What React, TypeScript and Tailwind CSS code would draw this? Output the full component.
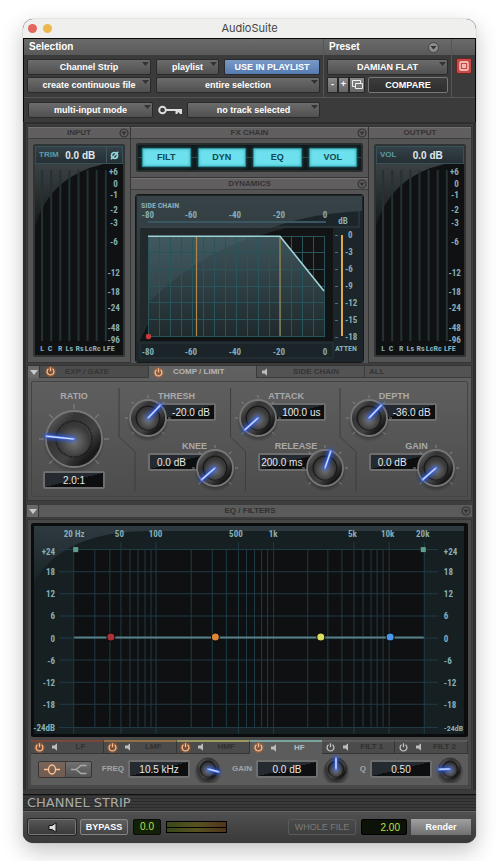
import React, { useId } from "react";

const narrow = '"Liberation Sans Narrow", "Roboto Condensed", "Open Sans Condensed", "DejaVu Sans Condensed", sans-serif';

function Dropdown({ label, value, className = "" }: { label: string; value: string; className?: string }) {
  return (
    <div className={`relative h-4 ${className}`}>
      <select
        aria-label={label}
        defaultValue={value}
        className="block h-4 w-full appearance-none rounded-[2px] border border-[#2a2a2a] bg-linear-to-b from-[#6c6c6c] to-[#505050] px-2 text-center text-[9px] leading-[14px] font-bold text-white outline-none [text-align-last:center]"
      >
        <option>{value}</option>
      </select>
      <svg className="pointer-events-none absolute top-[3px] right-[2px]" width="7" height="4" viewBox="0 0 7 4" aria-hidden="true">
        <path d="M0 0h7L3.5 4z" fill="#333" />
      </svg>
    </div>
  );
}

function MenuDot({ className = "" }: { className?: string }) {
  return (
    <button type="button" aria-label="Panel menu" className={className}>
      <svg className="block" width="10" height="10" viewBox="0 0 10 10">
        <circle cx="5" cy="5" r="4" fill="none" stroke="#343434" strokeWidth="1.2" />
        <path d="M2.4 3.4h5.2L5 7.4z" fill="#343434" />
      </svg>
    </button>
  );
}

function PanelTitle({ children, menu = true }: { children: React.ReactNode; menu?: boolean }) {
  return (
    <div className="flex h-3 items-center border-y border-t-[#747171] border-b-[#3d3d3d] bg-[#615e5f] px-px">
      <span className="w-[10px]" />
      <h2 className="flex-1 text-center text-[8px] leading-[10px] font-bold text-[#353333]">{children}</h2>
      {menu ? <MenuDot /> : <span className="w-[10px]" />}
    </div>
  );
}

const meterScale: [string, number][] = [
  ["+6", 8], ["0", 20], ["-1", 31], ["-2", 45], ["-3", 58], ["-6", 77],
  ["-12", 108], ["-18", 127], ["-24", 142], ["-48", 162], ["-96", 174],
];
const channels: [string, number][] = [
  ["L", 7], ["C", 15], ["R", 25], ["Ls", 34], ["Rs", 44], ["Lc", 53], ["Rc", 61], ["LFE", 73],
];

function Meter({ title, name, phase }: { title: string; name: string; phase?: boolean }) {
  const id = useId();
  return (
    <section className="flex flex-col border border-[#353535] bg-[#565556]">
      <PanelTitle menu={!!phase}>{title}</PanelTitle>
      <div className="m-[5px] flex-1 rounded-[2px] border-2 border-[#303435] bg-[#101112]">
        <div className="flex h-[18px] items-center border border-[#35525a] bg-linear-to-b from-[#344148] to-[#252f34]">
          <label htmlFor={id} className="pl-[3px] text-[8px] font-bold text-[#5e9ba5]">{name}</label>
          <input id={id} defaultValue="0.0 dB" className="w-0 flex-1 bg-transparent pr-1 text-center text-[10px] font-bold text-[#e2e8ea] outline-none" />
          {phase && (
            <button type="button" aria-label="Invert phase" className="flex h-4 w-[16px] items-center justify-center border-l border-[#3e565d]">
              <svg width="9" height="9" viewBox="0 0 9 9">
                <circle cx="4.5" cy="4.5" r="3" fill="none" stroke="#96d8df" strokeWidth="1.7" />
                <path d="M.8 8.2 8.2.8" stroke="#96d8df" strokeWidth="1.3" />
              </svg>
            </button>
          )}
        </div>
        <svg className="block w-full" viewBox="0 0 87 186" role="img" aria-label={`${title} level meter`}>
          <defs>
            <linearGradient id={`glass-${title}`} x1="0" y1="0" x2="0" y2="1">
              <stop offset="0" stopColor="#3b4143" />
              <stop offset="1" stopColor="#17191a" />
            </linearGradient>
          </defs>
          <path d="M0 0H68Q14 12 0 62z" fill={`url(#glass-${title})`} />
          {[7, 16, 25, 34, 43, 52, 61, 70].map((x) => (
            <rect key={x} x={x - 1} y="6" width="2" height="169" fill="#243236" />
          ))}
          <g fill="#86aeb7" fontSize="9" fontWeight="700" fontFamily={narrow}>
            {meterScale.map(([t, y]) => (
              <text key={t} x={t.length > 2 ? 84 : 82} y={y + 3} textAnchor="end">{t}</text>
            ))}
            {channels.map(([t, x]) => (
              <text key={t} x={x} y="185" textAnchor="middle" fontSize="8">{t}</text>
            ))}
          </g>
        </svg>
      </div>
    </section>
  );
}

const dynTicks: [string, number][] = [["-80", 12], ["-60", 55], ["-40", 99], ["-20", 143], ["0", 189]];

function DynamicsGraph() {
  return (
    <svg className="block w-full" viewBox="0 0 227 167" role="img" aria-label="Dynamics curve">
      <defs>
        <linearGradient id="dynFill" x1="0" y1="0" x2="0" y2="1">
          <stop offset="0" stopColor="#3d5359" />
          <stop offset="1" stopColor="#1f2a2d" />
        </linearGradient>
        <linearGradient id="dynGlass" x1="0" y1="0" x2="0" y2="1">
          <stop offset="0" stopColor="#384347" />
          <stop offset="1" stopColor="#232d31" />
        </linearGradient>
      </defs>
      <rect width="227" height="167" rx="2" fill="#1c2529" />
      <path d="M1 1H226V16Q90 22 18 120L1 150z" fill="url(#dynGlass)" />
      <rect x="4" y="5" width="219" height="27" fill="none" stroke="#37454a" />
      <rect x="4" y="33" width="193" height="113" fill="#121314" />
      <path d="M4 33H150Q40 60 4 146z" fill="#23282a" />
      <path d="M12 41H144L188 96V141H12z" fill="url(#dynFill)" />
      <path d="M12 41H120Q60 60 12 108z" fill="#60808a" opacity=".15" />
      <g stroke="#28545c">
        {Array.from({ length: 17 }, (_, i) => <line key={i} x1={12.5 + i * 11} x2={12.5 + i * 11} y1="41" y2="141" />)}
        {[41, 57, 74, 91, 107, 124, 141].map((y) => <line key={y} x1="12" x2="189" y1={y + 0.5} y2={y + 0.5} />)}
      </g>
      <path d="M60.5 41V141M144 41V141" stroke="#b0884e" strokeWidth="1.2" />
      <path d="M12 41.2H144L188 96" fill="none" stroke="#9ed3d8" strokeWidth="1.6" />
      <circle cx="12.5" cy="141.5" r="2.7" fill="#c43a3a" />
      <path d="M12 27H190" stroke="#385763" strokeWidth="2" />
      <rect x="4" y="148" width="193" height="15" fill="#1b2529" stroke="#2a373c" />
      <path d="M206 40V141" stroke="#dda84a" strokeWidth="2" />
      <g fill="#86aeb7" fontSize="9" fontWeight="700" fontFamily={narrow}>
        <text x="5" y="13" fontSize="8">SIDE CHAIN</text>
        {dynTicks.map(([t, x]) => (
          <React.Fragment key={t}>
            <text x={x} y="23" textAnchor="middle">{t}</text>
            <text x={x} y="160" textAnchor="middle">{t}</text>
          </React.Fragment>
        ))}
        <text x="207" y="29" textAnchor="middle">dB</text>
        {[0, 3, 6, 9, 12, 15, 18].map((n, i) => (
          <React.Fragment key={n}>
            <path d={`M199 ${40.5 + i * 17}h3`} stroke="#4d7078" />
            <text x={n ? 209 : 212} y={43 + i * 17}>{n ? `-${n}` : "0"}</text>
          </React.Fragment>
        ))}
        <text x="210" y="156" textAnchor="middle" fontSize="8">ATTEN</text>
      </g>
    </svg>
  );
}

function Knob({ label, size, r, angle, ring = true, className = "" }: { label: string; size: number; r: number; angle: number; ring?: boolean; className?: string }) {
  const id = useId();
  const c = size / 2;
  return (
    <div className={`relative shrink-0 ${className}`}>
      <svg className="block" width={size} height={size} viewBox={`0 0 ${size} ${size}`} aria-hidden="true">
        <defs>
          <linearGradient id={`${id}b`} x1="0" y1="0" x2="1" y2="1">
            <stop offset="0" stopColor="#757575" />
            <stop offset=".3" stopColor="#343434" />
            <stop offset=".6" stopColor="#424242" />
            <stop offset=".8" stopColor="#171717" />
            <stop offset="1" stopColor="#3a3a3a" />
          </linearGradient>
          <radialGradient id={`${id}c`} cx=".5" cy=".55">
            <stop offset="0" stopColor="#747474" />
            <stop offset="1" stopColor="#383838" />
          </radialGradient>
          <radialGradient id={`${id}s`}>
            <stop offset=".5" stopColor="#000" stopOpacity=".6" />
            <stop offset="1" stopColor="#000" stopOpacity="0" />
          </radialGradient>
          <filter id={`${id}g`} filterUnits="userSpaceOnUse" x="0" y="0" width={size} height={size}>
            <feGaussianBlur stdDeviation="2" />
          </filter>
        </defs>
        {ring && [-135, -90, -45, 0, 45, 90, 135].map((a) => (
          <line key={a} x1={c} x2={c} y1={c - r - 1} y2={c - r - (r > 20 ? 6 : 4)} stroke="#858585" transform={`rotate(${a} ${c} ${c})`} />
        ))}
        <circle cx={c} cy={c + 3} r={r + 2} fill={`url(#${id}s)`} />
        <circle cx={c} cy={c} r={r - 1} fill={`url(#${id}b)`} stroke={ring ? "#777" : "#333"} strokeWidth={ring ? 1.8 : 1} />
        <circle cx={c} cy={c} r={r * 0.62} fill="none" stroke="#1b1b1b" strokeWidth="1.5" strokeDasharray={r > 20 ? "1.5 1" : undefined} />
        <circle cx={c} cy={c + 1} r={r * 0.56} fill={`url(#${id}c)`} />
        <g transform={`rotate(${angle} ${c} ${c})`} strokeLinecap="round">
          <line x1={c} x2={c} y1={c} y2={c - r + 1} stroke="#255dff" strokeWidth="4" filter={`url(#${id}g)`} />
          <line x1={c} x2={c} y1={c} y2={c - r + 1} stroke="#7197ff" strokeWidth="2.2" />
          <line x1={c} x2={c} y1={c - 1} y2={c - r + 2} stroke="#dce7ff" strokeWidth="1" />
        </g>
      </svg>
      <input type="range" aria-label={`${label} knob`} className="absolute inset-0 size-full cursor-pointer opacity-0" />
    </div>
  );
}

const fieldClass =
  "block h-[18px] rounded-[2px] border-2 border-[#6e6e6e] bg-linear-to-br from-[#252a31] from-50% to-[#0d0e10] to-50% text-center text-[10px] leading-[14px] text-[#e8e8e8] outline-none";

function UpperParam({ label, value, angle }: { label: string; value: string; angle: number }) {
  const id = useId();
  return (
    <div className="flex items-start">
      <Knob label={label} size={48} r={19} angle={angle} className="z-10 mt-1" />
      <div className="-ml-[14px]">
        <label htmlFor={id} className="relative z-20 block h-[13px] text-[9px] leading-[13px] font-bold text-[#a9a9a9]">{label}</label>
        <input id={id} defaultValue={value} className={`${fieldClass} w-[58px] pl-2`} />
      </div>
    </div>
  );
}

function LowerParam({ label, value, angle }: { label: string; value: string; angle: number }) {
  const id = useId();
  return (
    <div className="-mt-[2px] flex items-start pl-6">
      <div>
        <label htmlFor={id} className="relative z-20 block h-[13px] text-right text-[9px] leading-[13px] font-bold text-[#a9a9a9]">{label}</label>
        <input id={id} defaultValue={value} className={`${fieldClass} w-[59px] pr-3`} />
      </div>
      <Knob label={label} size={48} r={19} angle={angle} className="z-10 mt-1 -ml-4" />
    </div>
  );
}

function Power({ on = false }: { on?: boolean }) {
  return (
    <svg className="block shrink-0 overflow-visible" width="9" height="9" viewBox="0 0 9 9" aria-hidden="true">
      {on && <circle cx="4.5" cy="4.5" r="5.5" fill="#d8641f" opacity=".3" />}
      <path d="M2.5 1.8a3.4 3.4 0 1 0 4 0M4.5 .3v4" fill="none" stroke={on ? "#ffba8a" : "#c2c2c2"} strokeWidth="1.3" />
    </svg>
  );
}

function Speaker() {
  return (
    <svg className="block shrink-0" width="6" height="8" viewBox="0 0 6 8" aria-hidden="true">
      <path d="M0 2.5h2.5L5 .3v7.4L2.5 5.5H0z" fill="#bdbdbd" />
    </svg>
  );
}

function Fold() {
  return (
    <button type="button" aria-label="Collapse section" className="flex h-full w-3 shrink-0 items-center justify-center border-r border-[#343434] bg-[#696969]">
      <svg width="8" height="5" viewBox="0 0 8 5"><path d="M0 0h8L4 5z" fill="#c9c9c9" /></svg>
    </button>
  );
}

const vLines = [42, 63, 78, 89, 98, 106, 113, 119, 124, 159, 180, 194, 206, 214, 222, 229, 235, 241, 275, 295, 309, 321, 330, 338, 344, 350, 356, 391];
const tallLines = [42, 89, 124, 206, 241, 321, 356, 391];
const hLines = [26, 48, 70, 92, 114, 136, 158, 180, 203];
const gains = ["+24", "18", "12", "6", "0", "-6", "-12", "-18", "-24dB"];
const freqs: [string, number][] = [["20 Hz", 43], ["50", 88], ["100", 124], ["500", 204], ["1k", 241], ["5k", 320], ["10k", 355], ["20k", 390]];
const bands: [string, number][] = [["#a83238", 79], ["#dd8638", 183], ["#dcdf62", 288], ["#4a98ec", 357]];

function EqGraph() {
  return (
    <svg className="block w-full" viewBox="0 0 435 213" role="img" aria-label="EQ curve">
      <defs>
        <linearGradient id="eqGlass" x1="0" y1="0" x2="0" y2="1">
          <stop offset="0" stopColor="#2e3a40" />
          <stop offset="1" stopColor="#1a2427" />
        </linearGradient>
      </defs>
      <rect width="435" height="213" rx="2" fill="#0a0c0d" />
      <rect x="3" y="3" width="428" height="207" fill="#162022" />
      <path d="M3 3H431V8H120Q30 8 3 60z" fill="url(#eqGlass)" />
      <rect x="42" y="26" width="349" height="177" fill="#0f1011" />
      <g stroke="#203b46">
        {vLines.map((x) => {
          const tall = tallLines.includes(x);
          return <line key={x} x1={x + 0.5} x2={x + 0.5} y1={tall ? 19 : 26} y2={tall ? 210 : 203} />;
        })}
        {hLines.map((y) => <line key={y} x1="28" x2="405" y1={y + 0.5} y2={y + 0.5} />)}
      </g>
      <path d="M43 114H391" stroke="#578087" strokeWidth="2" />
      <rect x="42" y="24" width="5" height="5" fill="#5f9e8e" />
      <rect x="388" y="24" width="5" height="5" fill="#5f9e8e" />
      {bands.map(([c, x]) => <circle key={c} cx={x + 0.5} cy="113.5" r="4" fill={c} stroke="#0a0b0c" strokeWidth="1" />)}
      <g fill="#86aeb7" fontSize="9" fontWeight="700" fontFamily={narrow}>
        {freqs.map(([t, x]) => <text key={t} x={x} y="14" textAnchor="middle">{t}</text>)}
        {gains.map((t, i) => {
          const y = i === 0 ? 32 : hLines[i] + 4;
          return (
            <React.Fragment key={t}>
              <text x="24" y={y} textAnchor="end">{t}</text>
              <text x="411" y={y} fontSize={i === 8 ? 8 : 9}>{t}</text>
            </React.Fragment>
          );
        })}
      </g>
    </svg>
  );
}

const eqTabs = [
  { name: "LF", on: true, bar: "border-t-[#7b4638]" },
  { name: "LMF", on: true, bar: "border-t-[#927045]" },
  { name: "HMF", on: true, bar: "border-t-[#9a9a60]" },
  { name: "HF", on: true, bar: "border-t-[#7ba39e]", active: true },
  { name: "FILT 1", on: false, bar: "border-t-[#5b5b5b]" },
  { name: "FILT 2", on: false, bar: "border-t-[#5b5b5b]" },
];

function EqParam({ label, value, angle }: { label: string; value: string; angle: number }) {
  const id = useId();
  return (
    <div className="flex items-center">
      <label htmlFor={id} className="mr-1 text-[8px] font-bold text-[#a5a5a5]">{label}</label>
      <input id={id} defaultValue={value} className={`${fieldClass} w-[62px]`} />
      <Knob label={label} size={28} r={12} angle={angle} ring={false} className="ml-1" />
    </div>
  );
}

const smallButton = "flex h-4 items-center justify-center border border-[#272727] bg-linear-to-b from-[#8a8a8a] to-[#666] text-[9px] font-bold text-white";

export default function App() {
  return (
    <main className="min-h-screen bg-white px-[23px] pt-[19px] pb-[27px] font-['Liberation_Sans',Arial,sans-serif]">
      <div className="overflow-hidden rounded-[10px] bg-[#3b3b3b] shadow-[0_8px_22px_rgba(0,0,0,0.24),0_0_1px_rgba(0,0,0,0.6)]">
        <header className="relative flex h-[19px] items-center justify-center bg-[#efefee]">
          <div className="absolute left-[5px] flex gap-[6px]">
            <button type="button" aria-label="Close" className="size-[9px] rounded-full bg-[#e2655e]" />
            <button type="button" aria-label="Minimize" className="size-[9px] rounded-full bg-[#ecb84e]" />
          </div>
          <h1 className="font-[Inter,sans-serif] text-[11px] leading-[19px] text-[#444]">AudioSuite</h1>
        </header>

        <div className="border-x border-t border-[#080808]">
          <div className="grid grid-cols-[1fr_128px_23px] border-b border-[#555]">
            <section>
              <h2 className="h-4 border-r border-[#555] bg-linear-to-b from-[#6b6b6b] to-[#595959] pl-[5px] text-[10px] leading-4 font-bold text-white">Selection</h2>
              <div className="flex flex-col gap-[2px] border-r border-[#555] px-[3px] pt-1 pb-1">
                <div className="flex gap-[5px]">
                  <Dropdown label="Plug-in" value="Channel Strip" className="w-[124px]" />
                  <Dropdown label="Selection reference" value="playlist" className="w-[63px]" />
                  <button type="button" className="h-4 flex-1 rounded-[2px] border border-[#2a2a2a] bg-linear-to-b from-[#7a9bc9] to-[#557bb2] text-[9px] leading-[14px] font-bold text-white">USE IN PLAYLIST</button>
                </div>
                <div className="flex gap-[5px]">
                  <Dropdown label="File mode" value="create continuous file" className="w-[124px]" />
                  <Dropdown label="Processing input" value="entire selection" className="flex-1" />
                </div>
              </div>
            </section>
            <section>
              <div className="flex h-4 items-center justify-between border-r border-[#555] bg-linear-to-b from-[#6b6b6b] to-[#595959] pr-1 pl-[5px]">
                <h2 className="text-[10px] leading-4 font-bold text-white">Preset</h2>
                <button type="button" aria-label="Preset menu" className="mr-2">
                  <svg className="block" width="11" height="11" viewBox="0 0 11 11">
                    <circle cx="5.5" cy="5.5" r="5" fill="#8c8c8c" stroke="#444" />
                    <path d="M2.5 4h6l-3 3.5z" fill="#333" />
                  </svg>
                </button>
              </div>
              <div className="flex flex-col gap-[2px] border-r border-[#555] px-[3px] pt-1 pb-1">
                <Dropdown label="Preset" value="DAMIAN FLAT" />
                <div className="flex">
                  <button type="button" aria-label="Previous preset" className={`${smallButton} w-[11px]`}>-</button>
                  <button type="button" aria-label="Next preset" className={`${smallButton} w-[11px]`}>+</button>
                  <button type="button" aria-label="Copy settings" className={`${smallButton} w-[16px]`}>
                    <svg width="11" height="10" viewBox="0 0 11 10" fill="none" stroke="#eee">
                      <path d="M3 6.5H.5v-6h8v3" /><path d="M3.5 3.5h7v5h-7z" />
                    </svg>
                  </button>
                  <button type="button" className="ml-[3px] h-4 flex-1 rounded-[2px] border border-[#777] bg-linear-to-b from-[#3c3c3c] to-[#2e2e2e] text-[9px] leading-[14px] font-bold text-white">COMPARE</button>
                </div>
              </div>
            </section>
            <div>
              <div className="h-4 bg-linear-to-b from-[#6b6b6b] to-[#595959]" />
              <button type="button" aria-label="Target" className="mt-[3px] ml-1 flex size-4 items-center justify-center rounded-[2px] border border-[#6e2420] bg-[#c94a45]">
                <svg width="10" height="10" viewBox="0 0 10 10" fill="none" stroke="#ffd9d6" strokeWidth="1.3">
                  <rect x="1" y="1" width="8" height="8" rx="1" /><rect x="3.8" y="3.8" width="2.4" height="2.4" />
                </svg>
              </button>
            </div>
          </div>
          <div className="grid grid-cols-[1fr_151px] pt-1 pb-1">
            <div className="flex items-center pr-1 pl-1">
              <Dropdown label="Input mode" value="multi-input mode" className="w-[125px]" />
              <svg className="mx-[5px]" width="24" height="10" viewBox="0 0 24 10" aria-hidden="true">
                <circle cx="4.5" cy="5" r="3.3" fill="none" stroke="#ddd" strokeWidth="1.9" />
                <path d="M8 4h16v5h-2l-1.5-2L19 9h-1.500V6H8z" fill="#ddd" />
              </svg>
              <Dropdown label="Side-chain input" value="no track selected" className="flex-1" />
            </div>
          </div>
        </div>

        <div className="border-x-[3px] border-t-2 border-[#2e2e2e] bg-[#3d3d3d] px-px pt-[2px]">
          <div className="grid grid-cols-[104px_1fr_104px]">
            <Meter title="INPUT" name="TRIM" phase />
            <div className="flex flex-col bg-[#565556]">
              <section className="border-y border-[#353535]">
                <PanelTitle>FX CHAIN</PanelTitle>
                <div className="m-[5px] mt-1 flex gap-[7px] rounded-[2px] border-2 border-[#2a2d2e] bg-[#111a1d] bg-linear-to-r from-[#26484e] to-[#26484e] bg-[length:100%_1px] bg-center bg-no-repeat px-1 py-[3px]">
                  {["FILT", "DYN", "EQ", "VOL"].map((n) => (
                    <button key={n} type="button" className="h-[19px] flex-1 rounded-[1px] border border-[#2f929d] bg-[#6ce0ed] text-[9px] leading-[17px] font-bold text-[#124850] shadow-[inset_0_0_3px_#35a6b5,0_0_3px_#22747d]">{n}</button>
                  ))}
                </div>
              </section>
              <section>
                <PanelTitle>DYNAMICS</PanelTitle>
                <div className="mx-1 mt-1 rounded-[3px] border border-[#171717]">
                  <DynamicsGraph />
                </div>
              </section>
            </div>
            <Meter title="OUTPUT" name="VOL" />
          </div>

          <section className="mt-[2px] border border-[#353535] bg-linear-to-b from-[#616161] to-[#4c4c4c]">
            <div className="flex h-3 text-[8px] leading-3 font-bold text-[#353535]">
              <Fold />
              <button type="button" className="flex flex-1 items-center gap-[10px] border-r border-b border-[#3b3b3b] bg-[#4c4c4c] pl-[6px]"><Power on />EXP / GATE</button>
              <button type="button" className="flex flex-1 items-center gap-[10px] pl-[5px] text-[#b5b5b5]"><Power on />COMP / LIMIT</button>
              <button type="button" className="flex flex-1 items-center border-b border-l border-[#3b3b3b] bg-[#535353] pl-[5px]"><Speaker /><span className="flex-1 text-center">SIDE CHAIN</span></button>
              <button type="button" className="flex-1 border-b border-l border-[#3b3b3b] bg-[#535353] pl-1 text-left">ALL</button>
            </div>
            <div className="relative m-[3px] flex rounded-[2px] border border-[#444] pt-2 pb-1">
              <svg className="absolute inset-0 size-full" viewBox="0 0 437 118" preserveAspectRatio="none" fill="none" stroke="#3e3e3e" aria-hidden="true">
                <path d="M87.500 6V57L103.500 72V113M199.500 6V57L214.500 72V113M309.500 6V57L325.500 72V113" />
              </svg>
              <div className="relative ml-[6px] flex w-[72px] flex-col items-center">
                <label htmlFor="ratio" className="h-[13px] text-[9px] leading-[13px] font-bold text-[#a9a9a9]">RATIO</label>
                <Knob label="Ratio" size={72} r={29} angle={276} />
                <input id="ratio" defaultValue="2.0:1" className={`${fieldClass} relative -mt-1 w-[62px]`} />
              </div>
              <div className="relative ml-[14px] grid flex-1 grid-cols-3 pr-3">
                <div><UpperParam label="THRESH" value="-20.0 dB" angle={44} /><LowerParam label="KNEE" value="0.0 dB" angle={229} /></div>
                <div><UpperParam label="ATTACK" value="100.0 us" angle={228} /><LowerParam label="RELEASE" value="200.0 ms" angle={19} /></div>
                <div><UpperParam label="DEPTH" value="-36.0 dB" angle={44} /><LowerParam label="GAIN" value="0.0 dB" angle={229} /></div>
              </div>
            </div>
          </section>

          <section className="mt-1">
            <div className="flex h-3 items-center bg-[#5b5b5b]">
              <Fold />
              <h2 className="flex-1 text-center text-[8px] leading-3 font-bold text-[#303030]">EQ / FILTERS</h2>
              <MenuDot className="mr-px" />
            </div>
            <div className="mt-[2px] border border-[#353535] bg-[#484848] px-[3px] pt-[3px] pb-1">
              <EqGraph />
              <div className="mt-[3px] grid grid-cols-6">
                {eqTabs.map((t) => (
                  <button key={t.name} type="button" className={`flex h-[14px] items-center border-t-2 pl-1 text-[8px] leading-3 font-bold ${t.bar} ${t.active ? "bg-[#5c5c5c] text-[#bbb]" : "border-r border-b border-r-[#353535] border-b-[#353535] bg-[#4b4b4b] text-[#313131]"}`}>
                    <Power on={t.on} /><span className="w-2" /><Speaker /><span className="flex-1 text-center">{t.name}</span>
                  </button>
                ))}
              </div>
              <div className="flex h-[31px] items-center justify-between bg-[#5c5c5c] pr-1 pl-[7px]">
                <div className="flex h-[17px] rounded-[2px] border border-[#353535] bg-linear-to-b from-[#707070] to-[#545454]">
                  <button type="button" aria-label="Peak shape" className="flex w-[26px] items-center justify-center bg-[#805f4c]/60">
                    <svg width="16" height="11" viewBox="0 0 16 11" fill="none" stroke="#ffc293" strokeWidth="1.4"><ellipse cx="8" cy="5.5" rx="3.5" ry="4.5" /><path d="M0 5.500h4M12 5.500h4" /></svg>
                  </button>
                  <button type="button" aria-label="Shelf shape" className="flex w-[26px] items-center justify-center border-l border-[#404040]">
                    <svg width="16" height="11" viewBox="0 0 16 11" fill="none" stroke="#aaa" strokeWidth="1.3"><path d="M0 5.500h5M15.500 1.500H10L5 5.500l5 4h5.500" /></svg>
                  </button>
                </div>
                <EqParam label="FREQ" value="10.5 kHz" angle={105} />
                <EqParam label="GAIN" value="0.0 dB" angle={0} />
                <EqParam label="Q" value="0.50" angle={268} />
              </div>
            </div>
          </section>
        </div>

        <div className="mt-1 h-[17px] border-t border-[#111] bg-[repeating-linear-gradient(#2c2c2c_0_1px,#393939_1px_3px)] pl-1 font-['DejaVu_Sans',sans-serif] text-[13px] leading-4 text-[#aaa]">CHANNEL STRIP</div>

        <footer className="flex h-8 items-center border-t border-[#666] bg-linear-to-b from-[#505050] to-[#393939] px-[5px]">
          <button type="button" aria-label="Preview" className="flex h-4 w-12 items-center justify-center rounded-[2px] border border-[#777] bg-linear-to-b from-[#565656] to-[#3b3b3b] outline outline-[#252525]">
            <svg width="9" height="11" viewBox="0 0 9 11"><path d="M1 3.500h3L8 .8v9.400L4 7.500H1z" fill="#ddd" stroke="#111" /></svg>
          </button>
          <button type="button" className="ml-1 h-4 w-12 rounded-[2px] border border-[#858585] bg-linear-to-b from-[#616161] to-[#454545] text-[9px] leading-[14px] font-bold text-white">BYPASS</button>
          <output className="ml-[5px] block h-4 w-7 rounded-[2px] border border-[#0b0b0b] bg-[#12200a] text-center text-[10px] leading-[14px] text-[#b8e04a]">0.0</output>
          <div className="ml-[5px] flex h-3 w-[61px] flex-col gap-px border border-black bg-black">
            <span className="flex-1 bg-linear-to-r from-[#3a4818] via-[#575222] to-[#51341c]" />
            <span className="flex-1 bg-linear-to-r from-[#3a4818] via-[#575222] to-[#51341c]" />
          </div>
          <button type="button" className="ml-auto h-4 w-[68px] rounded-[2px] border border-[#5a5a5a] text-[9px] leading-[14px] text-[#7a7a7a]">WHOLE FILE</button>
          <input aria-label="Handle length" defaultValue="2.00" className="ml-[5px] h-4 w-[46px] rounded-[2px] border border-black bg-[#0d1209] pr-[6px] text-right text-[10px] leading-[14px] text-[#b8e04a] outline-none" />
          <button type="button" className="ml-1 h-4 w-[60px] bg-linear-to-b from-[#a0a0a0] to-[#707070] text-[9px] leading-4 font-bold text-white">Render</button>
        </footer>
      </div>
    </main>
  );
}
